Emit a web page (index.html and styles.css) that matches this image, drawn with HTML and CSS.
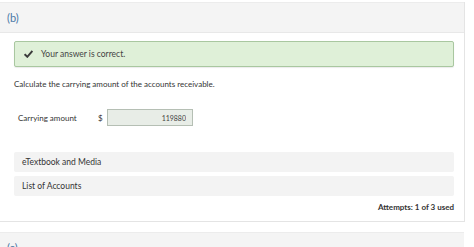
FILE: index.html
```html
<!DOCTYPE html>
<html lang="en">
<head>
  <meta charset="UTF-8">
  <title>Question (b)</title>
  <link rel="stylesheet" href="styles.css">
</head>
<body>
  <!-- Part (b) -->
  <div class="part">
    <div class="part-header">(b)</div>
    <div class="part-body">
      <div class="alert-success">
        <svg class="check" width="9" height="8" viewBox="0 0 9 8">
          <path d="M0.6 4.2 L3.3 6.8 L8.4 0.9" fill="none" stroke="#3c3c3c" stroke-width="1.9"/>
        </svg>
        <span>Your answer is correct.</span>
      </div>

      <p class="question">Calculate the carrying amount of the accounts receivable.</p>

      <div class="answer-row">
        <label for="carrying">Carrying amount</label>
        <span class="currency">$</span>
        <input type="text" id="carrying" value="119880" readonly>
      </div>

      <div class="resources">
        <div class="resource">eTextbook and Media</div>
        <div class="resource">List of Accounts</div>
      </div>

      <div class="attempts">Attempts: 1 of 3 used</div>
    </div>
  </div>

  <!-- Part (c) -->
  <div class="part next">
    <div class="part-header">(c)</div>
  </div>
</body>
</html>
```

FILE: styles.css
```css
body {
  margin: 0;
  padding-top: 2px;
  background: white;
  font-family: Lato, "Open Sans", sans-serif;
  color: #333;
}

.part {
  width: 464px;
  border-right: 1px solid #e4e4e4;
  border-bottom: 1px solid #e4e4e4;
}

.part-header {
  background: #f4f4f4;
  border-top: 1px solid #ececec;
  border-bottom: 1px solid #e8e8e8;
  height: 29px;
  line-height: 29px;
  padding-left: 7px;
  font-size: 11px;
  color: #4a78a6;
}

.part-body {
  padding: 8px 10px 9px 14px;
}

.alert-success {
  display: flex;
  align-items: center;
  gap: 8px;
  height: 24px;
  padding-left: 9px;
  background: #dff0d8;
  border: 1px solid #a9c7a0;
  border-radius: 2px;
  box-shadow: 0 1px 1px rgba(0,0,0,0.08);
  font-size: 8.5px;
  color: #444;
}

.check {
  display: block;
}

.question {
  margin: 12px 0 0;
  font-size: 8px;
  color: #333;
}

.answer-row {
  display: flex;
  align-items: center;
  margin-top: 20px;
  padding-left: 4px;
  font-size: 8px;
}

.answer-row label {
  width: 80px;
}

.currency {
  width: 9px;
}

.answer-row input {
  width: 72px;
  height: 15px;
  padding: 0 6px;
  border: 1px solid #b5bfb4;
  background: #e8ede7;
  text-align: right;
  font-family: Lato, sans-serif;
  font-size: 7px;
  color: #444;
}

.resources {
  display: flex;
  flex-direction: column;
  gap: 4px;
  margin-top: 26px;
}

.resource {
  height: 20px;
  line-height: 20px;
  padding-left: 8px;
  background: #f3f3f3;
  border-radius: 2px;
  font-size: 8.5px;
  color: #333;
}

.attempts {
  margin-top: 6px;
  text-align: right;
  font-size: 8px;
  font-weight: bold;
  color: #333;
}

.next {
  margin-top: 10px;
  border: none;
}
```
